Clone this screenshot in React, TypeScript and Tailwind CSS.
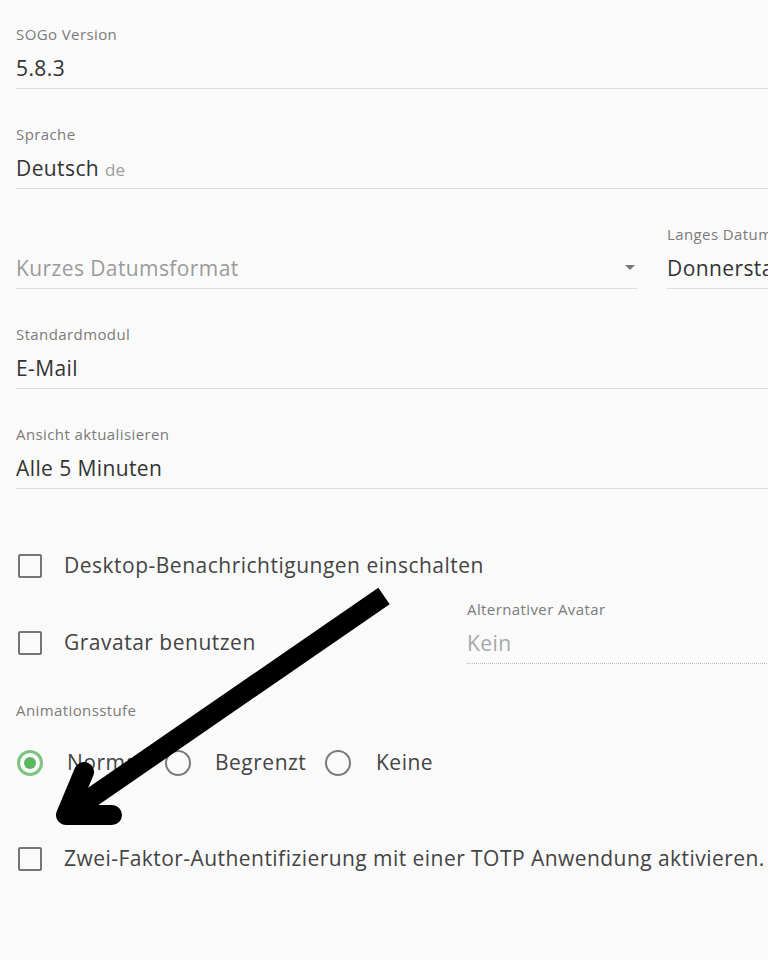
import React from "react";

const font = { fontFamily: '"Open Sans", "Noto Sans", sans-serif' };

function Field({
  label,
  children,
  top = "pt-[35px]",
  dotted = false,
}: {
  label?: string;
  children: React.ReactNode;
  top?: string;
  dotted?: boolean;
}) {
  return (
    <div
      className={`${top} pb-[6px] ${
        dotted ? "border-b border-dotted border-[#bdbdbd]" : "border-b border-[#dedede]"
      }`}
    >
      <div className="h-5 text-[15px] leading-5 tracking-[0.4px] text-[#7b7b7b]">{label ?? "\u00a0"}</div>
      <div className="mt-[10px] h-[28px] text-[21px] leading-[28px] tracking-[0.4px] text-[#333]">{children}</div>
    </div>
  );
}

function Checkbox() {
  return <div className="h-[24px] w-[24px] shrink-0 rounded-[2px] border-2 border-[#757575]" />;
}

function Radio({ checked = false }: { checked?: boolean }) {
  return checked ? (
    <div className="flex h-[26px] w-[26px] shrink-0 items-center justify-center rounded-full border-[3px] border-[#7cc47f]">
      <div className="h-[12px] w-[12px] rounded-full bg-[#5cb860]" />
    </div>
  ) : (
    <div className="h-[26px] w-[26px] shrink-0 rounded-full border-2 border-[#7a7a7a]" />
  );
}

export default function App() {
  return (
    <div className="relative h-[960px] w-[768px] overflow-hidden bg-[#fafafa]" style={font}>
      <div className="w-[1300px] pl-4">
        <Field label="SOGo Version" top="pt-[24px]">
          5.8.3
        </Field>
        <Field label="Sprache">
          Deutsch <span className="text-[17px] tracking-[0.2px] text-[#9e9e9e]">de</span>
        </Field>
        <div className="flex gap-[30px]">
          <div className="relative w-[621px] shrink-0">
            <Field>
              <span className="text-[#9a9a9a]">Kurzes Datumsformat</span>
            </Field>
            <div className="absolute right-[2px] top-[76px] h-0 w-0 border-x-[5px] border-t-[5px] border-x-transparent border-t-[#777]" />
          </div>
          <div className="w-[621px] shrink-0">
            <Field label="Langes Datumsformat">Donnerstag, 12. Oktober 2023</Field>
          </div>
        </div>
        <Field label="Standardmodul">E-Mail</Field>
        <Field label="Ansicht aktualisieren">Alle 5 Minuten</Field>

        <div className="mt-[65px] flex h-[24px] items-center gap-[22px] pl-[2px] text-[21px] tracking-[0.5px] text-[#444]">
          <Checkbox />
          <span>Desktop-Benachrichtigungen einschalten</span>
        </div>

        <div className="mt-[17px] flex items-start">
          <div className="mt-[36px] flex h-[24px] w-[451px] shrink-0 items-center gap-[22px] pl-[2px] text-[21px] tracking-[0.5px] text-[#444]">
            <Checkbox />
            <span>Gravatar benutzen</span>
          </div>
          <div className="w-[500px] shrink-0">
            <Field label="Alternativer Avatar" dotted top="pt-[4px]">
              <span className="text-[#a8a8a8]">Kein</span>
            </Field>
          </div>
        </div>

        <div className="mt-[36px] h-5 text-[15px] leading-5 tracking-[0.4px] text-[#7b7b7b]">Animationsstufe</div>
        <div className="mt-[30px] flex h-[26px] items-center pl-[1px] text-[21px] tracking-[0.5px] text-[#444]">
          <Radio checked />
          <span className="ml-[24px] w-[98px]">Normal</span>
          <Radio />
          <span className="ml-[24px] w-[110px]">Begrenzt</span>
          <Radio />
          <span className="ml-[25px]">Keine</span>
        </div>

        <div className="mt-[71px] flex h-[24px] items-center gap-[22px] pl-[2px] text-[21px] tracking-[0.45px] text-[#444]">
          <Checkbox />
          <span className="whitespace-nowrap">Zwei-Faktor-Authentifizierung mit einer TOTP Anwendung aktivieren.</span>
        </div>
      </div>

      {/* hand-drawn pointer over the 2FA option */}
      <svg className="pointer-events-none absolute left-0 top-0" width="768" height="960" viewBox="0 0 768 960">
        <line x1="384" y1="596" x2="72" y2="811" stroke="#000" strokeWidth="20" strokeLinecap="butt" />
        <polyline
          points="84,772 66,815 112,815"
          fill="none"
          stroke="#000"
          strokeWidth="20"
          strokeLinecap="round"
          strokeLinejoin="round"
        />
      </svg>
    </div>
  );
}
